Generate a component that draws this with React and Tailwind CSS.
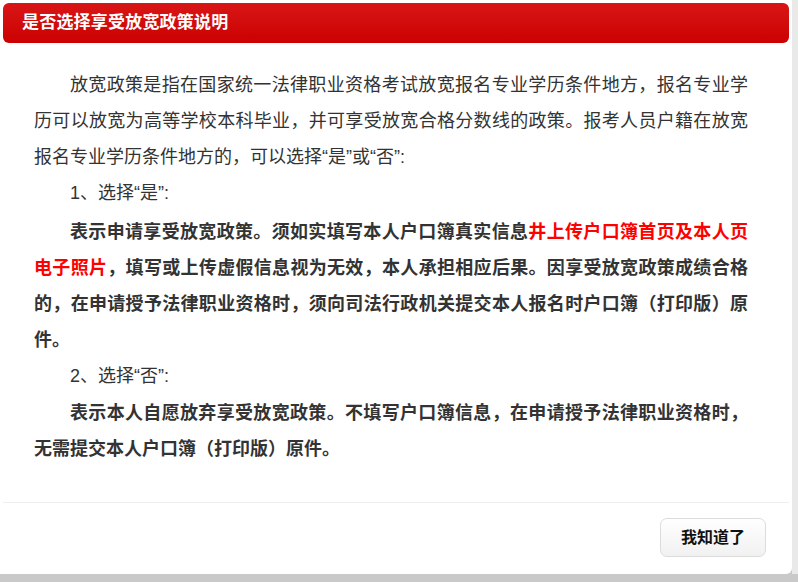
import React from "react";

const font = { fontFamily: '"Liberation Sans", "Noto Sans CJK SC", sans-serif' };

export default function App() {
  return (
    <div className="w-[798px] h-[582px] flex flex-col bg-[#c9c9c9] overflow-hidden" style={font}>
      <div className="flex h-[574px]">
        <div className="w-[792px] h-full bg-white rounded-br-md flex flex-col">
          {/* title bar */}
          <div className="mx-[3px] mt-[3px] h-[40px] rounded-[6px] bg-gradient-to-b from-[#d81515] to-[#cc0000] flex items-center pl-[19px]">
            <span className="text-white font-bold text-[17px] tracking-[0.2px]">是否选择享受放宽政策说明</span>
          </div>

          {/* body */}
          <div className="flex-1 pl-[34px] w-[748px] pt-[24px] text-[18px] leading-[36px] text-[#333] text-justify">
            <p className="indent-[36px]">
              放宽政策是指在国家统一法律职业资格考试放宽报名专业学历条件地方，报名专业学历可以放宽为高等学校本科毕业，并可享受放宽合格分数线的政策。报考人员户籍在放宽报名专业学历条件地方的，可以选择“是”或“否”:
            </p>
            <p className="indent-[36px]">1、选择“是”:</p>
            <p className="indent-[36px] font-bold mt-[3px]">
              表示申请享受放宽政策。须如实填写本人户口簿真实信息<span className="text-[#ff0000]">井上传户口簿首页及本人页电子照片</span>，填写或上传虚假信息视为无效，本人承担相应后果。因享受放宽政策成绩合格的，在申请授予法律职业资格时，须向司法行政机关提交本人报名时户口簿（打印版）原件。
            </p>
            <p className="indent-[36px]">2、选择“否”:</p>
            <p className="indent-[36px] font-bold mt-[1px]">
              表示本人自愿放弃享受放宽政策。不填写户口簿信息，在申请授予法律职业资格时，无需提交本人户口簿（打印版）原件。
            </p>
          </div>

          {/* footer */}
          <div className="mx-[3px] border-t border-[#eeeeee] h-[72px] flex justify-end items-start pt-[15px] pr-[23px]">
            <button className="w-[106px] h-[39px] rounded-[7px] border border-[#dcdcdc] bg-gradient-to-b from-white to-[#f1f1f1] text-[16px] font-bold text-[#111]">
              我知道了
            </button>
          </div>
        </div>
        <div className="flex-1 bg-[#e9e9e9]" />
      </div>
      <div className="flex-1 bg-[#c9c9c9]" />
    </div>
  );
}
